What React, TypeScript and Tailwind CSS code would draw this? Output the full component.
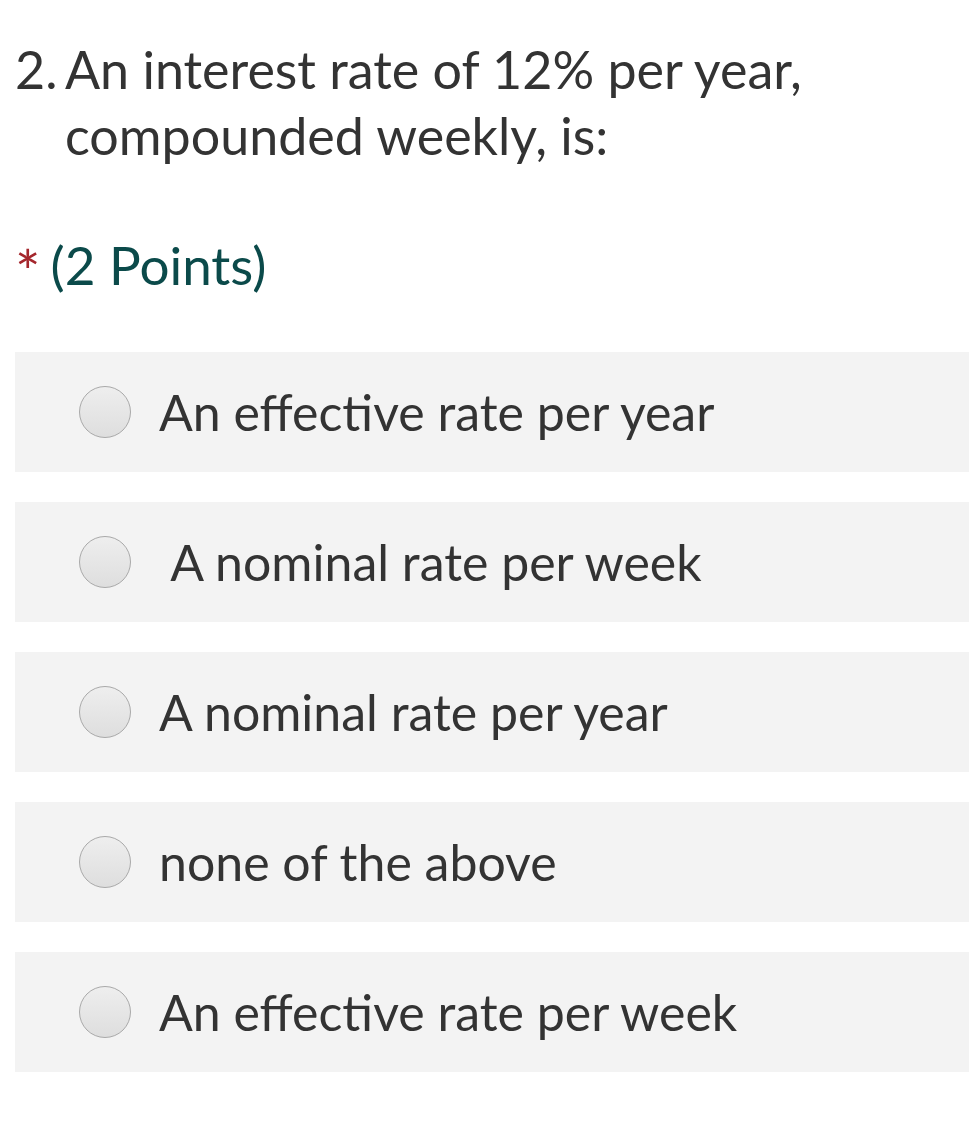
import React from "react";

const options = [
  "An effective rate per year",
  " A nominal rate per week",
  "A nominal rate per year",
  "none of the above",
  "An effective rate per week",
];

const Radio: React.FC = () => (
  <div className="w-[52px] h-[52px] shrink-0 rounded-full border border-[#a9a9a9] bg-gradient-to-b from-[#eeeeee] to-[#dedede]" />
);

const App: React.FC = () => {
  return (
    <div className="w-[969px] h-[1132px] bg-white pl-[15px] font-['Lato',sans-serif] text-[#333333]">
      <div className="flex pt-[36px] text-[52px] leading-[66px]">
        <span className="w-[50px] shrink-0">2.</span>
        <span>
          An interest rate of 12% per year,
          <br />
          compounded weekly, is:
        </span>
      </div>

      <div className="mt-[58px] flex items-center text-[53px] leading-[66px]">
        <span className="text-[#a4262c] mr-[10px] text-[60px] pt-[12px]">*</span>
        <span className="text-[#0b4a4a]">(2 Points)</span>
      </div>

      <div className="mt-[48px] flex flex-col gap-[30px]">
        {options.map((opt) => (
          <div
            key={opt}
            className="h-[120px] bg-[#f3f3f3] flex items-center pl-[64px]"
          >
            <Radio />
            <span className="ml-[28px] text-[50px] whitespace-pre">{opt}</span>
          </div>
        ))}
      </div>
    </div>
  );
};

export default App;
